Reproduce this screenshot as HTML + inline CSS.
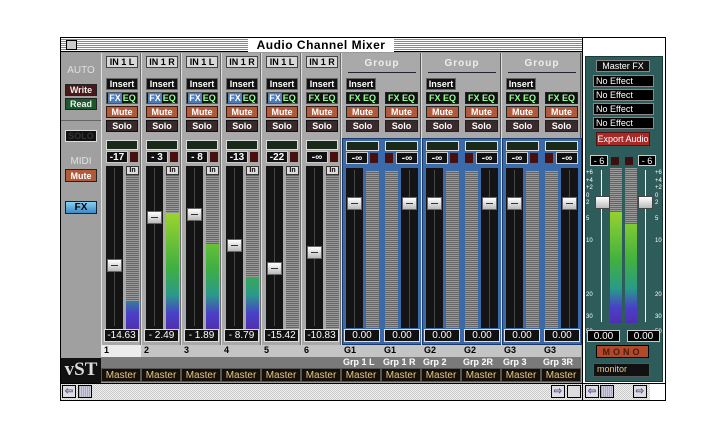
<!DOCTYPE html>
<html><head><meta charset="utf-8"><style>
*{margin:0;padding:0;box-sizing:border-box}
body{width:725px;height:439px;background:#fff;position:relative;overflow:hidden;font-family:"Liberation Sans",sans-serif;font-size:9px;font-weight:bold}
.a{position:absolute}
.t{display:flex;align-items:center;justify-content:center;white-space:nowrap}
.strip{position:absolute;top:53px;width:40px;height:292px;background:#a9a9a9;border-left:1px solid #e0e0e0;border-right:1px solid #6a6a6a}
.in{background:#d8d8d8;border:1px solid #444;color:#000;height:12px;width:32px;top:3px;left:4px;font-size:9px}
.ins{background:#111;color:#fff;height:12px;width:32px;left:4px;top:25px;border:1px solid #666}
.fx{background:#111;color:#9f9;height:12px;width:32px;left:4px;top:39px;border:1px solid #555}
.fx b{background:#4a7ab8;color:#fff;padding:0 1px;margin-right:1px}
.mu{background:#b05a3a;color:#fff;height:12px;width:32px;left:4px;top:53px;border:1px solid #3a1a10}
.so{background:#3a2a2c;color:#fff;height:12px;width:32px;left:4px;top:67px;border:1px solid #111}
.mb{background:#1a2a1a;border:1px solid #ddd;height:10px;width:32px;left:4px;top:87px}
.vd{background:#111;color:#fff;height:12px;width:22px;left:4px;top:98px;border:1px solid #ccc;font-size:10px}
.led{background:#4a1010;height:10px;width:8px;left:28px;top:99px}
.trk{background:#141414;left:4px;top:113px;width:17px;height:163px}
.trk:after{content:"";position:absolute;left:8px;top:2px;width:1px;height:158px;background:#444}
.cap{width:15px;height:13px;left:5px;background:linear-gradient(#fff,#bbb);border:1px solid #666}
.cap:after{content:"";position:absolute;left:3px;top:5px;width:7px;height:1px;background:#333}
.met{left:24px;top:113px;width:13px;height:163px;background:repeating-linear-gradient(#999 0 1px,#666 1px 2px);overflow:hidden}
.lab{left:24px;top:113px;width:13px;height:9px;background:#ddd;color:#000;font-size:7px;border:1px solid #333}
.fill{position:absolute;left:0;bottom:0;width:13px;background:linear-gradient(#d8e820,#90d030 30%,#40b040 60%,#2a9a8a 78%,#4a40c8 90%,#5030b0) left bottom/100% 155px no-repeat}
.vb{background:#111;color:#fff;height:13px;width:35px;left:2px;top:276px;border:1px solid #ddd;font-size:10px;font-weight:normal}
.num{top:345px;height:12px;background:#c4c4c4;color:#000;padding-left:3px;font-size:9px}
.nm{top:357px;height:11px;background:#7a7a7a;color:#fff;font-size:9px;padding-left:2px}
.ms{top:368px;height:14px;background:#161008;color:#e8c890;font-weight:normal;font-size:10px;border:1px solid #555}
.grp{position:absolute;top:53px;width:80px;height:292px;background:#a9a9a9;border-left:1px solid #ddd;border-right:1px solid #555}
.gb{position:absolute;left:0;top:85px;width:80px;height:207px;background:#3a6aaa;border:1px solid #1a3a6a}
.sm{height:12px;width:33px;border:1px solid #222}
</style></head><body>
<div class="a" style="left:60px;top:37px;width:523px;height:364px;background:#9a9a9a;border:1px solid #000"></div>
<div class="a" style="left:61px;top:38px;width:521px;height:14px;background:repeating-linear-gradient(#fff 0 1px,#888 1px 2px);border-bottom:1px solid #000"></div>
<div class="a" style="left:66px;top:40px;width:11px;height:10px;background:#ccc;border:1px solid #000"></div>
<div class="a t" style="left:248px;top:38px;width:146px;height:14px;background:#fff;font-size:12px;letter-spacing:0.5px">Audio Channel Mixer</div>
<div class="a" style="left:61px;top:53px;width:40px;height:330px;background:#a0a0a0"></div>
<div class="a t" style="left:61px;top:64px;width:40px;height:12px;color:#e0e0e0;font-weight:normal;font-size:10px">AUTO</div>
<div class="a t" style="left:65px;top:84px;width:32px;height:12px;background:#4a1818;color:#eee;border:1px solid #222">Write</div>
<div class="a t" style="left:65px;top:98px;width:32px;height:12px;background:#1a5a2a;color:#eee;border:1px solid #222">Read</div>
<div class="a" style="left:61px;top:120px;width:40px;height:1px;background:#666"></div>
<div class="a t" style="left:65px;top:130px;width:32px;height:12px;background:#111;color:#333;border:1px solid #ddd">SOLO</div>
<div class="a t" style="left:61px;top:155px;width:40px;height:12px;color:#e0e0e0;font-weight:normal;font-size:10px">MIDI</div>
<div class="a t" style="left:65px;top:169px;width:32px;height:13px;background:#b05a3a;color:#fff;border:1px solid #222">Mute</div>
<div class="a t" style="left:65px;top:201px;width:32px;height:13px;background:linear-gradient(#8ad0f0,#3a8ac8);color:#000;border:1px solid #123;font-size:10px">FX</div>
<div class="a" style="left:61px;top:358px;width:40px;height:25px;background:#111"></div>
<div class="a t" style="left:61px;top:360px;width:40px;height:20px;color:#ddd;font-family:'Liberation Serif',serif;font-size:19px">vST</div>

<div class="strip" style="left:101px"><div class="a t in">IN 1 L</div><div class="a t ins">Insert</div><div class="a t fx"><b>FX</b>EQ</div><div class="a t mu">Mute</div><div class="a t so">Solo</div><div class="a mb"></div><div class="a t vd">-17</div><div class="a led"></div><div class="a trk"></div><div class="a met"><div class="fill" style="height:28px"></div></div><div class="a t lab">In</div><div class="a cap" style="top:206px"></div><div class="a t vb">-14.63</div></div>
<div class="strip" style="left:141px"><div class="a t in">IN 1 R</div><div class="a t ins">Insert</div><div class="a t fx"><b>FX</b>EQ</div><div class="a t mu">Mute</div><div class="a t so">Solo</div><div class="a mb"></div><div class="a t vd">- 3</div><div class="a led"></div><div class="a trk"></div><div class="a met"><div class="fill" style="height:116px"></div></div><div class="a t lab">In</div><div class="a cap" style="top:158px"></div><div class="a t vb">- 2.49</div></div>
<div class="strip" style="left:181px"><div class="a t in">IN 1 L</div><div class="a t ins">Insert</div><div class="a t fx"><b>FX</b>EQ</div><div class="a t mu">Mute</div><div class="a t so">Solo</div><div class="a mb"></div><div class="a t vd">- 8</div><div class="a led"></div><div class="a trk"></div><div class="a met"><div class="fill" style="height:85px"></div></div><div class="a t lab">In</div><div class="a cap" style="top:155px"></div><div class="a t vb">- 1.89</div></div>
<div class="strip" style="left:221px"><div class="a t in">IN 1 R</div><div class="a t ins">Insert</div><div class="a t fx"><b>FX</b>EQ</div><div class="a t mu">Mute</div><div class="a t so">Solo</div><div class="a mb"></div><div class="a t vd">-13</div><div class="a led"></div><div class="a trk"></div><div class="a met"><div class="fill" style="height:52px"></div></div><div class="a t lab">In</div><div class="a cap" style="top:186px"></div><div class="a t vb">- 8.79</div></div>
<div class="strip" style="left:261px"><div class="a t in">IN 1 L</div><div class="a t ins">Insert</div><div class="a t fx"><b>FX</b>EQ</div><div class="a t mu">Mute</div><div class="a t so">Solo</div><div class="a mb"></div><div class="a t vd">-22</div><div class="a led"></div><div class="a trk"></div><div class="a met"></div><div class="a t lab">In</div><div class="a cap" style="top:209px"></div><div class="a t vb">-15.42</div></div>
<div class="strip" style="left:301px"><div class="a t in">IN 1 R</div><div class="a t ins">Insert</div><div class="a t fx">FX EQ</div><div class="a t mu">Mute</div><div class="a t so">Solo</div><div class="a mb"></div><div class="a t vd">-∞</div><div class="a led"></div><div class="a trk"></div><div class="a met"></div><div class="a t lab">In</div><div class="a cap" style="top:193px"></div><div class="a t vb">-10.83</div></div>

<div class="grp" style="left:341px">
<div class="a t" style="left:0;top:5px;width:80px;color:#eee;font-size:10px;letter-spacing:1px">Group</div>
<div class="a" style="left:6px;top:19px;width:68px;height:1px;background:#223"></div>
<div class="a t ins" style="width:30px;top:25px">Insert</div>
<div class="a t sm" style="left:4px;top:39px;background:#111;color:#9f9">FX EQ</div><div class="a t sm" style="left:43px;top:39px;background:#111;color:#9f9">FX EQ</div>
<div class="a t sm" style="left:4px;top:53px;background:#b05a3a;color:#fff">Mute</div><div class="a t sm" style="left:43px;top:53px;background:#b05a3a;color:#fff">Mute</div>
<div class="a t sm" style="left:4px;top:67px;background:#3a2a2c;color:#fff">Solo</div><div class="a t sm" style="left:43px;top:67px;background:#3a2a2c;color:#fff">Solo</div>
<div class="gb"></div>
<div class="a mb" style="left:4px;top:88px;width:33px"></div><div class="a mb" style="left:43px;top:88px;width:33px"></div>
<div class="a t vd" style="top:99px">-∞</div><div class="a led" style="top:100px"></div>
<div class="a led" style="left:43px;top:100px"></div><div class="a t vd" style="left:54px;top:99px">-∞</div>
<div class="a trk" style="top:115px;height:160px"></div><div class="a met" style="top:118px;height:157px"></div>
<div class="a met" style="left:43px;top:118px;height:157px"></div><div class="a trk" style="left:59px;top:115px;height:160px"></div>
<div class="a cap" style="top:144px"></div><div class="a cap" style="left:60px;top:144px"></div>
<div class="a t vb" style="width:36px">0.00</div><div class="a t vb" style="left:42px;width:36px">0.00</div>
</div>
<div class="grp" style="left:421px">
<div class="a t" style="left:0;top:5px;width:80px;color:#eee;font-size:10px;letter-spacing:1px">Group</div>
<div class="a" style="left:6px;top:19px;width:68px;height:1px;background:#223"></div>
<div class="a t ins" style="width:30px;top:25px">Insert</div>
<div class="a t sm" style="left:4px;top:39px;background:#111;color:#9f9">FX EQ</div><div class="a t sm" style="left:43px;top:39px;background:#111;color:#9f9">FX EQ</div>
<div class="a t sm" style="left:4px;top:53px;background:#b05a3a;color:#fff">Mute</div><div class="a t sm" style="left:43px;top:53px;background:#b05a3a;color:#fff">Mute</div>
<div class="a t sm" style="left:4px;top:67px;background:#3a2a2c;color:#fff">Solo</div><div class="a t sm" style="left:43px;top:67px;background:#3a2a2c;color:#fff">Solo</div>
<div class="gb"></div>
<div class="a mb" style="left:4px;top:88px;width:33px"></div><div class="a mb" style="left:43px;top:88px;width:33px"></div>
<div class="a t vd" style="top:99px">-∞</div><div class="a led" style="top:100px"></div>
<div class="a led" style="left:43px;top:100px"></div><div class="a t vd" style="left:54px;top:99px">-∞</div>
<div class="a trk" style="top:115px;height:160px"></div><div class="a met" style="top:118px;height:157px"></div>
<div class="a met" style="left:43px;top:118px;height:157px"></div><div class="a trk" style="left:59px;top:115px;height:160px"></div>
<div class="a cap" style="top:144px"></div><div class="a cap" style="left:60px;top:144px"></div>
<div class="a t vb" style="width:36px">0.00</div><div class="a t vb" style="left:42px;width:36px">0.00</div>
</div>
<div class="grp" style="left:501px">
<div class="a t" style="left:0;top:5px;width:80px;color:#eee;font-size:10px;letter-spacing:1px">Group</div>
<div class="a" style="left:6px;top:19px;width:68px;height:1px;background:#223"></div>
<div class="a t ins" style="width:30px;top:25px">Insert</div>
<div class="a t sm" style="left:4px;top:39px;background:#111;color:#9f9">FX EQ</div><div class="a t sm" style="left:43px;top:39px;background:#111;color:#9f9">FX EQ</div>
<div class="a t sm" style="left:4px;top:53px;background:#b05a3a;color:#fff">Mute</div><div class="a t sm" style="left:43px;top:53px;background:#b05a3a;color:#fff">Mute</div>
<div class="a t sm" style="left:4px;top:67px;background:#3a2a2c;color:#fff">Solo</div><div class="a t sm" style="left:43px;top:67px;background:#3a2a2c;color:#fff">Solo</div>
<div class="gb"></div>
<div class="a mb" style="left:4px;top:88px;width:33px"></div><div class="a mb" style="left:43px;top:88px;width:33px"></div>
<div class="a t vd" style="top:99px">-∞</div><div class="a led" style="top:100px"></div>
<div class="a led" style="left:43px;top:100px"></div><div class="a t vd" style="left:54px;top:99px">-∞</div>
<div class="a trk" style="top:115px;height:160px"></div><div class="a met" style="top:118px;height:157px"></div>
<div class="a met" style="left:43px;top:118px;height:157px"></div><div class="a trk" style="left:59px;top:115px;height:160px"></div>
<div class="a cap" style="top:144px"></div><div class="a cap" style="left:60px;top:144px"></div>
<div class="a t vb" style="width:36px">0.00</div><div class="a t vb" style="left:42px;width:36px">0.00</div>
</div>

<div class="a num" style="left:101px;width:40px;background:#ececec">1</div>
<div class="a num" style="left:141px;width:40px">2</div>
<div class="a num" style="left:181px;width:40px">3</div>
<div class="a num" style="left:221px;width:40px">4</div>
<div class="a num" style="left:261px;width:40px">5</div>
<div class="a num" style="left:301px;width:40px">6</div>
<div class="a num" style="left:341px;width:40px">G1</div><div class="a num" style="left:381px;width:40px">G1</div>
<div class="a num" style="left:421px;width:40px">G2</div><div class="a num" style="left:461px;width:40px">G2</div>
<div class="a num" style="left:501px;width:40px">G3</div><div class="a num" style="left:541px;width:40px">G3</div>
<div class="a" style="left:101px;top:357px;width:480px;height:11px;background:#7a7a7a"></div>
<div class="a nm" style="left:341px;width:40px">Grp 1 L</div><div class="a nm" style="left:381px;width:40px">Grp 1 R</div>
<div class="a nm" style="left:421px;width:40px">Grp 2</div><div class="a nm" style="left:461px;width:40px">Grp 2R</div>
<div class="a nm" style="left:501px;width:40px">Grp 3</div><div class="a nm" style="left:541px;width:40px">Grp 3R</div>
<div class="a t ms" style="left:101px;width:40px">Master</div><div class="a t ms" style="left:141px;width:40px">Master</div>
<div class="a t ms" style="left:181px;width:40px">Master</div><div class="a t ms" style="left:221px;width:40px">Master</div>
<div class="a t ms" style="left:261px;width:40px">Master</div><div class="a t ms" style="left:301px;width:40px">Master</div>
<div class="a t ms" style="left:341px;width:40px">Master</div><div class="a t ms" style="left:381px;width:40px">Master</div>
<div class="a t ms" style="left:421px;width:40px">Master</div><div class="a t ms" style="left:461px;width:40px">Master</div>
<div class="a t ms" style="left:501px;width:40px">Master</div><div class="a t ms" style="left:541px;width:40px">Master</div>
<div class="a" style="left:61px;top:383px;width:521px;height:17px;background:repeating-conic-gradient(#ccc 0 25%,#eee 0 50%) 0 0/2px 2px;border-top:1px solid #000"></div>
<div class="a t" style="left:62px;top:385px;width:14px;height:13px;background:#ddd;border:1px solid #000;color:#55a;font-size:10px">⇦</div>
<div class="a" style="left:78px;top:385px;width:14px;height:13px;background:repeating-linear-gradient(90deg,#aab 0 1px,#ccd 1px 2px);border:1px solid #000"></div>
<div class="a t" style="left:551px;top:385px;width:14px;height:13px;background:#ddd;border:1px solid #000;color:#55a;font-size:10px">⇨</div>
<div class="a" style="left:567px;top:385px;width:14px;height:13px;background:#ddd;border:1px solid #000"></div>

<div class="a" style="left:582px;top:37px;width:84px;height:364px;background:#fff;border:1px solid #000"></div>
<div class="a" style="left:585px;top:56px;width:78px;height:326px;background:#2e5c5a;border:1px solid #1a3a38"></div>
<div class="a t" style="left:596px;top:60px;width:54px;height:12px;background:#111;color:#fff;border:1px solid #888;font-weight:normal">Master FX</div>
<div class="a" style="left:593px;top:75px;width:61px;height:12px;background:#000;color:#fff;border:1px solid #888;font-weight:normal;padding-left:2px;font-size:9px">No Effect</div>
<div class="a" style="left:593px;top:89px;width:61px;height:12px;background:#000;color:#fff;border:1px solid #888;font-weight:normal;padding-left:2px;font-size:9px">No Effect</div>
<div class="a" style="left:593px;top:103px;width:61px;height:12px;background:#000;color:#fff;border:1px solid #888;font-weight:normal;padding-left:2px;font-size:9px">No Effect</div>
<div class="a" style="left:593px;top:117px;width:61px;height:12px;background:#000;color:#fff;border:1px solid #888;font-weight:normal;padding-left:2px;font-size:9px">No Effect</div>
<div class="a t" style="left:596px;top:132px;width:54px;height:14px;background:#a82a28;color:#fff;font-weight:normal;font-size:9px;border:1px solid #511">Export Audio</div>
<div class="a t" style="left:590px;top:155px;width:18px;height:11px;background:#000;color:#fff;border:1px solid #ccc;font-weight:normal">- 6</div>
<div class="a" style="left:611px;top:157px;width:8px;height:8px;background:#3a1010"></div>
<div class="a" style="left:625px;top:157px;width:8px;height:8px;background:#3a1010"></div>
<div class="a t" style="left:638px;top:155px;width:18px;height:11px;background:#000;color:#fff;border:1px solid #ccc;font-weight:normal">- 6</div>
<div class="a" style="left:610px;top:168px;width:12px;height:155px;background:repeating-linear-gradient(#999 0 1px,#666 1px 2px);overflow:hidden"><div class="fill" style="width:12px;height:111px"></div></div>
<div class="a" style="left:625px;top:168px;width:12px;height:155px;background:repeating-linear-gradient(#999 0 1px,#666 1px 2px);overflow:hidden"><div class="fill" style="width:12px;height:99px"></div></div>
<div class="a" style="left:601px;top:170px;width:1px;height:152px;background:#fff"></div>
<div class="a" style="left:645px;top:170px;width:1px;height:152px;background:#fff"></div>
<div class="a" style="left:595px;top:196px;width:15px;height:13px;background:linear-gradient(#fff,#bbb);border:1px solid #444"></div>
<div class="a" style="left:638px;top:196px;width:15px;height:13px;background:linear-gradient(#fff,#bbb);border:1px solid #444"></div>
<div class="a" style="left:586px;top:170px;width:10px;font-size:6px;color:#fff;font-weight:normal;line-height:7.6px">+6<br>+4<br>+2<br>0<br>2<br><br>5<br><br><br>10<br><br><br><br><br><br><br>20<br><br><br>30<br><br>50</div>
<div class="a" style="left:655px;top:170px;width:10px;font-size:6px;color:#fff;font-weight:normal;line-height:7.6px">+6<br>+4<br>+2<br>0<br>2<br><br>5<br><br><br>10<br><br><br><br><br><br><br>20<br><br><br>30<br><br>50</div>
<div class="a t" style="left:587px;top:330px;width:33px;height:12px;background:#000;color:#fff;border:1px solid #ccc;font-weight:normal;font-size:10px">0.00</div>
<div class="a t" style="left:627px;top:330px;width:33px;height:12px;background:#000;color:#fff;border:1px solid #ccc;font-weight:normal;font-size:10px">0.00</div>
<div class="a t" style="left:596px;top:345px;width:53px;height:13px;background:#b04a2a;color:#4a1a10;border:1px solid #000;letter-spacing:3px;font-size:9px">MONO</div>
<div class="a" style="left:593px;top:363px;width:57px;height:14px;background:#111;color:#e8c890;font-weight:normal;font-size:9px;padding-left:3px;border:1px solid #555">monitor</div>
<div class="a" style="left:583px;top:383px;width:82px;height:17px;background:repeating-conic-gradient(#ccc 0 25%,#eee 0 50%) 0 0/2px 2px;border-top:1px solid #000"></div>
<div class="a t" style="left:585px;top:385px;width:14px;height:13px;background:#ddd;border:1px solid #000;color:#55a;font-size:10px">⇦</div>
<div class="a" style="left:600px;top:385px;width:14px;height:13px;background:repeating-linear-gradient(90deg,#aab 0 1px,#ccd 1px 2px);border:1px solid #000"></div>
<div class="a t" style="left:633px;top:385px;width:14px;height:13px;background:#ddd;border:1px solid #000;color:#55a;font-size:10px">⇨</div>
<div class="a" style="left:650px;top:384px;width:15px;height:16px;background:#fff"></div>
</body></html>
